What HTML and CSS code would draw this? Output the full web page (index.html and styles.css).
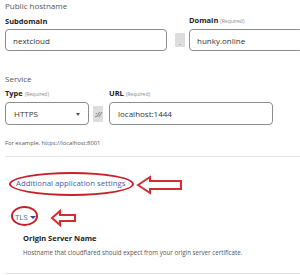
FILE: index.html
```html
<!DOCTYPE html>
<html>
<head>
<meta charset="utf-8">
<link rel="stylesheet" href="styles.css">
</head>
<body>
<div class="page">
  <div class="section-title t1">Public hostname</div>
  <div class="grid host">
    <div class="lbl">Subdomain</div>
    <div></div>
    <div class="lbl">Domain <span class="req">(Required)</span></div>
    <div class="input">nextcloud</div>
    <div class="addon dot">.</div>
    <div class="input">hunky.online</div>
  </div>

  <div class="section-title t2">Service</div>
  <div class="grid svc">
    <div class="lbl">Type <span class="req">(Required)</span></div>
    <div></div>
    <div class="lbl">URL <span class="req">(Required)</span></div>
    <div class="input select">HTTPS<span class="caret"></span></div>
    <div class="addon slash">://</div>
    <div class="input">localhost:1444</div>
  </div>
  <div class="hint">For example, https://localhost:8001</div>
  <div class="divider"></div>

  <div class="link-row"><a class="link">Additional application settings</a></div>
  <div class="tls-row"><span class="link tls">TLS<span class="caret blue"></span></span></div>

  <div class="opt">
    <div class="opt-title">Origin Server Name</div>
    <div class="opt-desc">Hostname that cloudflared should expect from your origin server certificate.</div>
  </div>
  <div class="divider bottom"></div>
</div>

<div class="ring r1"></div>
<div class="ring r2"></div>
<svg class="arrow a1" width="48" height="20" viewBox="0 0 48 20">
  <path d="M2 10 L14 2 L14 6 L45 6 L45 14 L14 14 L14 18 Z" fill="#fff" stroke="#d42a30" stroke-width="2" stroke-linejoin="miter"/>
</svg>
<svg class="arrow a2" width="28" height="20" viewBox="0 0 28 20">
  <path d="M2 10 L10 3 L10 7 L25 7 L25 13 L10 13 L10 17 Z" fill="#fff" stroke="#d42a30" stroke-width="2" stroke-linejoin="miter"/>
</svg>
</body>
</html>
```
FILE: styles.css
```css
html, body {
  margin: 0;
  padding: 0;
  background: #fff;
  overflow: hidden;
  width: 300px;
  height: 275px;
}
body {
  position: relative;
  font-family: "Open Sans", "Noto Sans", sans-serif;
  color: #333;
}
.page {
  padding-left: 5px;
  width: 295px;
  overflow: hidden;
}
.section-title {
  font-size: 8px;
  color: #555;
  line-height: 12px;
}
.t2 { margin-top: 22px; }
.grid {
  display: grid;
  align-items: end;
}
.host { grid-template-columns: 162px 18px 118px; }
.host > :nth-child(2), .host > :nth-child(5) { margin-left: 8px; }
.host > :nth-child(3), .host > :nth-child(6) { margin-left: 4px; }
.svc { grid-template-columns: 84px 14px 170px; }
.svc > :nth-child(2), .svc > :nth-child(5) { margin-left: 4px; }
.svc > :nth-child(3), .svc > :nth-child(6) { margin-left: 6px; }
.lbl {
  font-size: 7.5px;
  font-weight: 700;
  color: #222;
  line-height: 10px;
  margin-top: 3px;
  margin-bottom: 3px;
  white-space: nowrap;
}
.req {
  font-size: 5px;
  font-weight: 400;
  color: #888;
}
.input {
  box-sizing: border-box;
  height: 22px;
  border: 1px solid #8c8c8c;
  border-radius: 4px;
  font-size: 8px;
  color: #333;
  display: flex;
  align-items: center;
  padding-left: 7px;
  position: relative;
}
.svc .input { height: 23px; padding-left: 8px; }
.addon {
  align-self: center;
  background: #ddd;
  color: #777;
  height: 14px;
  font-size: 8px;
  display: flex;
  align-items: center;
  justify-content: center;
  width: 10px;
  border-radius: 1px;
}
.dot { align-items: flex-end; line-height: 10px; }
.slash { height: 16px; font-style: italic; font-size: 8px; color: #555; letter-spacing: -0.5px; }
.caret {
  position: absolute;
  right: 8px;
  top: 10px;
  width: 0;
  height: 0;
  border-left: 2.5px solid transparent;
  border-right: 2.5px solid transparent;
  border-top: 3px solid #555;
}
.hint {
  font-size: 5.8px;
  color: #555;
  margin-top: 14px;
  line-height: 8px;
}
.divider {
  height: 1px;
  background: #e3e3e3;
  margin-top: 9px;
}
.link {
  color: #4a5cad;
  text-decoration: none;
}
.link-row {
  margin-top: 20px;
  padding-left: 11px;
  font-size: 7.8px;
  line-height: 12px;
}
.tls-row {
  margin-top: 22px;
  padding-left: 10px;
  font-size: 7.8px;
  line-height: 12px;
}
.tls { display: inline-flex; align-items: center; }
.caret.blue {
  position: static;
  border-top-color: #2f4a9a;
  margin-left: 2px;
  border-left-width: 3px;
  border-right-width: 3px;
  border-top-width: 3.5px;
}
.opt {
  padding-left: 18px;
  margin-top: 9px;
}
.opt-title {
  font-size: 7.5px;
  font-weight: 700;
  color: #222;
  line-height: 12px;
}
.opt-desc {
  font-size: 6.2px;
  color: #555;
  margin-top: 4px;
  line-height: 9px;
  white-space: nowrap;
}
.divider.bottom { margin-top: 16px; }

.ring {
  position: absolute;
  border: 2px solid #c8202a;
  border-radius: 50%;
  box-sizing: border-box;
}
.r1 { left: 9px; top: 172px; width: 125px; height: 24px; }
.r2 { left: 11px; top: 206px; width: 27px; height: 20px; }
.arrow { position: absolute; }
.a1 { left: 136px; top: 175px; }
.a2 { left: 50px; top: 208px; }
```
